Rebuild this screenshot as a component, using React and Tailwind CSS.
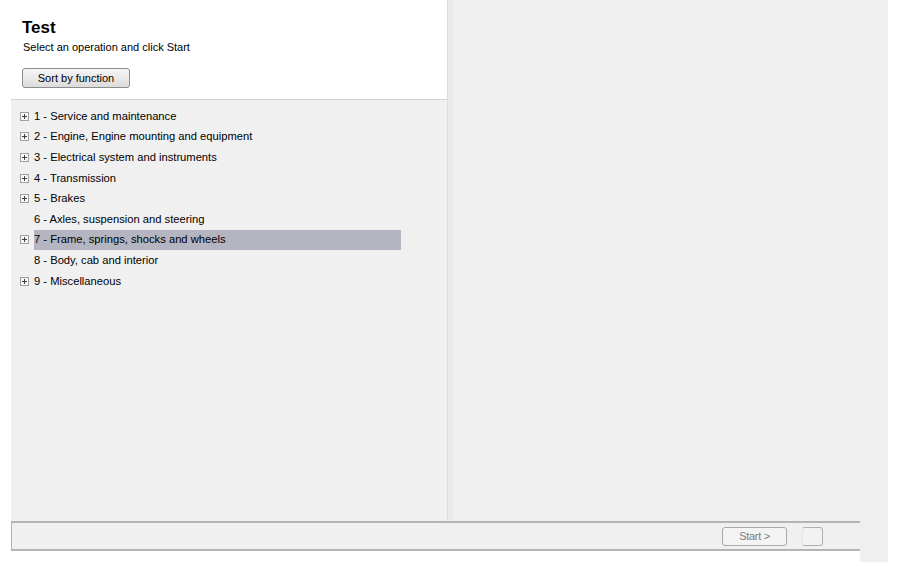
import React from "react";

const items = [
  { label: "1 - Service and maintenance", exp: true },
  { label: "2 - Engine, Engine mounting and equipment", exp: true },
  { label: "3 - Electrical system and instruments", exp: true },
  { label: "4 - Transmission", exp: true },
  { label: "5 - Brakes", exp: true },
  { label: "6 - Axles, suspension and steering", exp: false },
  { label: "7 - Frame, springs, shocks and wheels", exp: true, sel: true },
  { label: "8 - Body, cab and interior", exp: false },
  { label: "9 - Miscellaneous", exp: true },
];

function PlusBox() {
  return (
    <svg width="9" height="9" viewBox="0 0 9 9" className="block">
      <rect x="0.5" y="0.5" width="8" height="8" fill="#f7f7f7" stroke="#a0a0a0" />
      <line x1="2" y1="4.5" x2="7" y2="4.5" stroke="#404040" />
      <line x1="4.5" y1="2" x2="4.5" y2="7" stroke="#404040" />
    </svg>
  );
}

export default function App() {
  return (
    <div
      className="w-[900px] h-[562px] bg-white flex flex-col overflow-hidden text-black"
      style={{ fontFamily: '"Liberation Sans", Arial, sans-serif' }}
    >
      <div className="flex h-[521px]">
        <div className="w-[447px] flex flex-col">
          <div className="h-[99px] bg-white pl-[22px] pt-[18px]">
            <div className="text-[17px] font-bold leading-[20px]">Test</div>
            <div className="text-[11px] leading-[13px] mt-[3px] pl-[1px]">Select an operation and click Start</div>
            <button className="mt-[14px] w-[108px] h-[20px] border border-[#8c8c8c] rounded-[3px] bg-gradient-to-b from-[#f6f6f6] to-[#dcdcdc] text-[11px] leading-[18px] text-black">
              Sort by function
            </button>
          </div>
          <div className="flex-1 ml-[11px] bg-[#f0f0f0] border-t border-[#d4d4d4] pt-[6px]">
            {items.map((it) => (
              <div key={it.label} className="flex items-center h-[20.6px]">
                <div className="w-[23px] flex justify-start pl-[9px]">
                  {it.exp ? <PlusBox /> : null}
                </div>
                <div
                  className={
                    "h-full flex items-center text-[11.2px] w-[367px] " +
                    (it.sel ? "bg-[#b4b5c1]" : "")
                  }
                >
                  {it.label}
                </div>
              </div>
            ))}
          </div>
        </div>
        <div className="w-[6px] bg-[#e9e9ee] border-l border-[#dcdcdc]" />
        <div className="w-[435px] bg-[#efefef]" />
        <div className="flex-1 bg-white" />
      </div>
      <div className="flex h-[41px]">
        <div className="w-[860px] bg-white">
          <div className="ml-[11px] h-[30px] bg-[#f0f0f0] border-t-2 border-b-2 border-l border-[#b4b4b4] flex items-center justify-end pr-[37px]">
            <button className="w-[65px] h-[19px] border border-[#a8a8a8] rounded-[3px] bg-[#f4f4f4] text-[11px] leading-[17px] text-[#7c7c7c] tracking-[-0.3px]">
              Start &gt;
            </button>
            <div className="ml-[15px] w-[21px] h-[19px] border border-[#b0b0b0] border-l-[#e4e4e4] rounded-[3px] bg-[#f2f2f2]" />
          </div>
        </div>
        <div className="w-[28px] bg-[#efefef]" />
        <div className="flex-1 bg-white" />
      </div>
    </div>
  );
}
